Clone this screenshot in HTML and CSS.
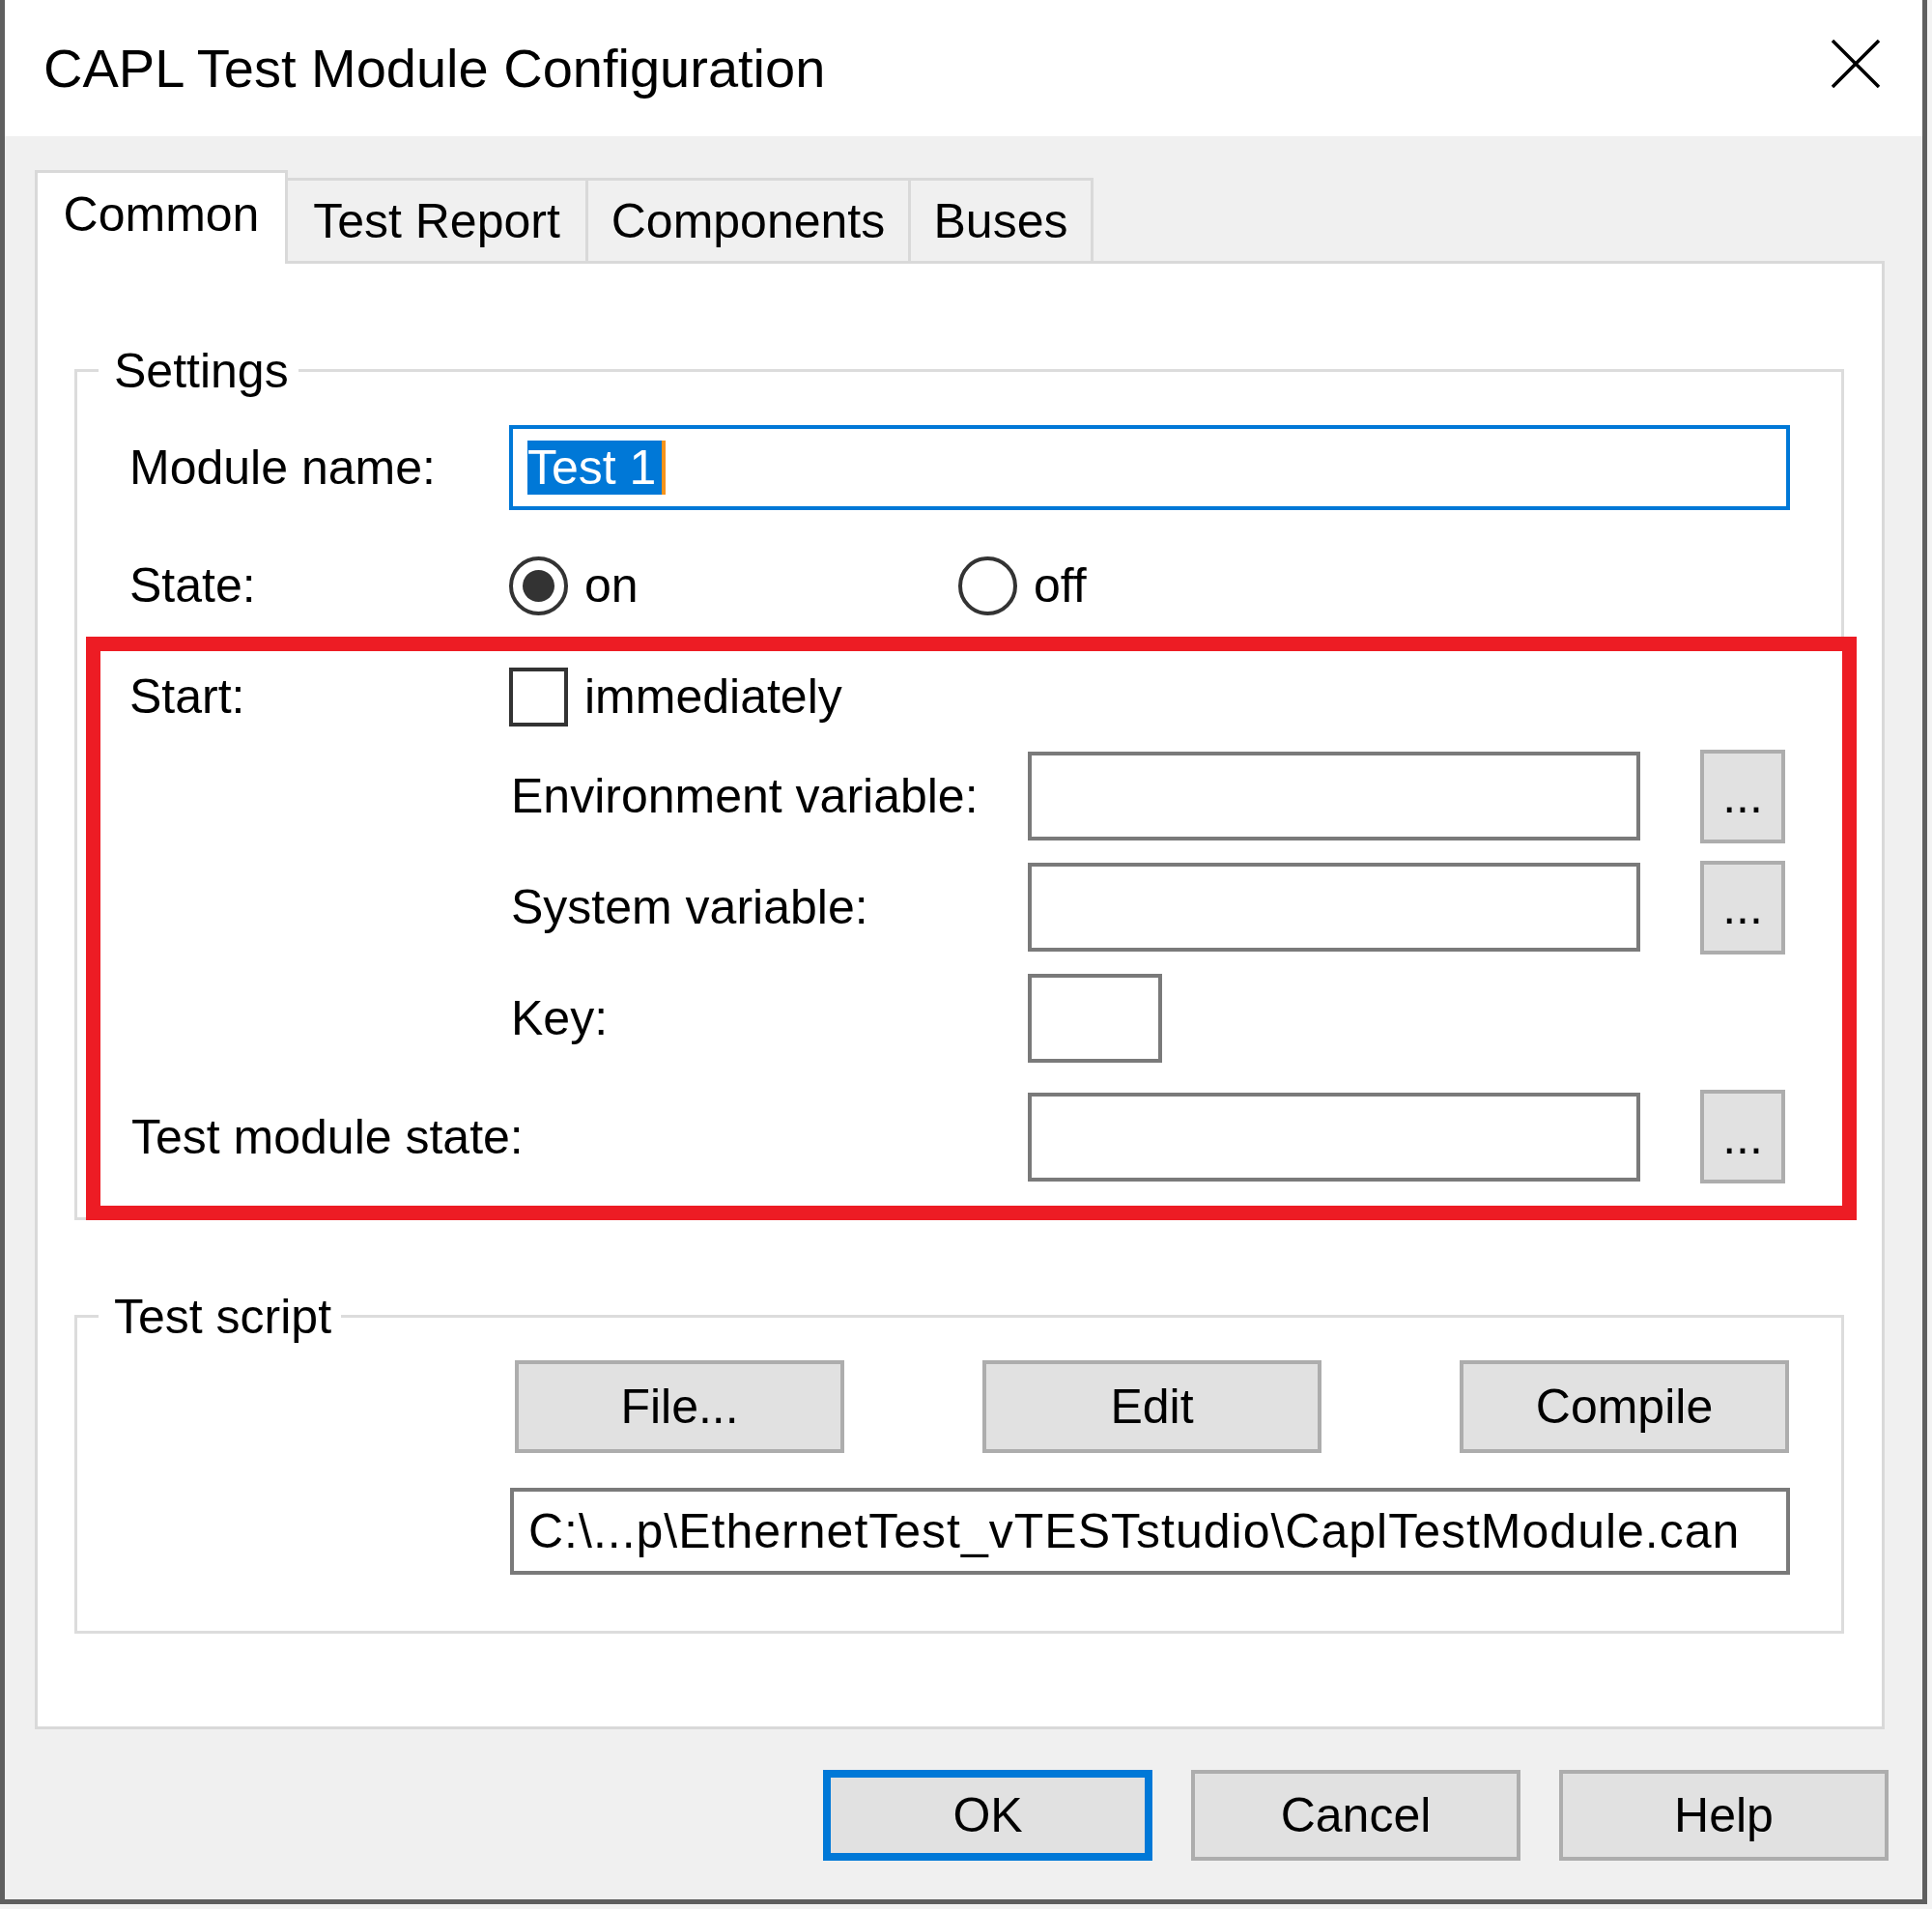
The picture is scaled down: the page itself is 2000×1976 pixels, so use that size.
FILE: index.html
```html
<!DOCTYPE html>
<html lang="en">

<head>
    <meta charset="UTF-8">
    <title>CAPL Test Module Configuration</title>
    <link rel="stylesheet" href="styles.css">
</head>

<body>

    <div class="window">

        <!-- Title bar -->
        <div class="titlebar">
            <span class="title">CAPL Test Module Configuration</span>
            <div class="close">
                <svg width="50" height="50" viewBox="0 0 50 50">
                    <path d="M1 1 L49 49 M49 1 L1 49" stroke="#000" stroke-width="3.5" fill="none" />
                </svg>
            </div>
        </div>

        <div class="dialog-body">

            <!-- Tabs -->
            <div class="tabs">
                <div class="tab active tab-common">Common</div>
                <div class="tab tab-report">Test Report</div>
                <div class="tab tab-components">Components</div>
                <div class="tab tab-buses">Buses</div>
            </div>

            <div class="panel">

                <!-- Settings group -->
                <div class="group settings">
                    <div class="group-title">Settings</div>

                    <div class="settings-top">
                        <span class="label">Module name:</span>
                        <div class="field field-focus">
                            <span class="selected">Test 1</span>
                        </div>

                        <span class="label">State:</span>
                        <div class="radios">
                            <label class="option option-on"><span class="radio checked"></span>on</label>
                            <label class="option"><span class="radio"></span>off</label>
                        </div>
                    </div>

                    <div class="start-box">
                        <span class="label">Start:</span>
                        <label class="option start-check"><span class="checkbox"></span>immediately</label>

                        <span class="label sub-label">Environment variable:</span>
                        <div class="field field-wide"></div>
                        <button class="btn btn-browse">...</button>

                        <span class="label sub-label">System variable:</span>
                        <div class="field field-wide"></div>
                        <button class="btn btn-browse">...</button>

                        <span class="label sub-label">Key:</span>
                        <div class="field field-key"></div>

                        <span class="label state-label">Test module state:</span>
                        <div class="field field-wide"></div>
                        <button class="btn btn-browse">...</button>
                    </div>
                </div>

                <!-- Test script group -->
                <div class="group script">
                    <div class="group-title">Test script</div>

                    <div class="script-content">
                        <div class="script-buttons">
                            <button class="btn btn-file">File...</button>
                            <button class="btn btn-edit">Edit</button>
                            <button class="btn btn-compile">Compile</button>
                        </div>
                        <div class="field field-path">C:\...p\EthernetTest_vTESTstudio\CaplTestModule.can</div>
                    </div>
                </div>

            </div>

            <!-- Dialog buttons -->
            <div class="footer">
                <button class="btn btn-dialog btn-default">OK</button>
                <button class="btn btn-dialog">Cancel</button>
                <button class="btn btn-dialog">Help</button>
            </div>

        </div>
    </div>

</body>

</html>
```

FILE: styles.css
```css
* {
    margin: 0;
    padding: 0;
    box-sizing: border-box;
}

body {
    width: 2000px;
    height: 1976px;
    background-color: #F3F3F3;
    font-family: "Liberation Sans", Arial, sans-serif;
    font-size: 50px;
    color: #000;
    overflow: hidden;
}

.window {
    width: 1995px;
    height: 1971px;
    display: flex;
    flex-direction: column;
    background-color: #F0F0F0;
    border: 5px solid #5F5F5F;
    border-top: none;
}

/* Title bar */
.titlebar {
    height: 141px;
    flex-shrink: 0;
    background-color: #FFFFFF;
    display: flex;
    align-items: center;
    justify-content: space-between;
    padding-left: 40px;
}

.title {
    font-size: 56px;
    color: #000;
}

.close {
    width: 138px;
    height: 132px;
    display: flex;
    align-items: center;
    justify-content: center;
    margin-bottom: 9px;
}

.dialog-body {
    flex: 1;
    display: flex;
    flex-direction: column;
    padding: 35px 39px 0 31px;
}

/* Tabs */
.tabs {
    display: flex;
    align-items: flex-end;
    height: 97px;
    margin-bottom: -3px;
    position: relative;
    z-index: 1;
}

.tab {
    height: 86px;
    margin-bottom: 3px;
    display: flex;
    align-items: center;
    justify-content: center;
    border-top: 3px solid #D9D9D9;
    border-right: 3px solid #D9D9D9;
    background-color: #F0F0F0;
    white-space: nowrap;
}

.tab.active {
    height: 97px;
    margin-bottom: 0;
    padding-bottom: 8px;
    border-left: 3px solid #D9D9D9;
    background-color: #FFFFFF;
}

.tab-common { width: 262px; }
.tab-report { width: 311px; }
.tab-components { width: 334px; }
.tab-buses { width: 189px; }

.panel {
    height: 1520px;
    flex-shrink: 0;
    background-color: #FFFFFF;
    border: 3px solid #D9D9D9;
    padding: 109px 39px 0 38px;
    display: flex;
    flex-direction: column;
}

/* Group boxes */
.group {
    border: 3px solid #DCDCDC;
}

.group-title {
    width: fit-content;
    line-height: 56px;
    height: 56px;
    margin: -29px 0 0 22px;
    padding: 0 10px 0 16px;
    background-color: #FFFFFF;
    white-space: nowrap;
}

.label {
    white-space: nowrap;
}

.settings-top {
    display: grid;
    grid-template-columns: 393px 1fr;
    grid-template-rows: 88px 58px;
    row-gap: 49px;
    align-items: center;
    padding: 28px 53px 0 54px;
}

.field {
    height: 92px;
    background-color: #FFFFFF;
    border: 4px solid #7A7A7A;
    display: flex;
    align-items: center;
    white-space: nowrap;
}

.field-focus {
    height: 88px;
    border-color: #0078D7;
    padding-left: 15px;
}

.selected {
    background-color: #0078D7;
    color: #FFFFFF;
    height: 56px;
    line-height: 56px;
    padding-right: 6px;
    border-right: 4px solid #F7941D;
}

.radios {
    display: flex;
    align-items: center;
}

.option {
    display: flex;
    align-items: center;
    gap: 17px;
    white-space: nowrap;
}

.option-on {
    width: 465px;
}

.radio {
    width: 61px;
    height: 61px;
    border-radius: 50%;
    border: 4px solid #333333;
    background-color: #FFFFFF;
    display: flex;
    align-items: center;
    justify-content: center;
}

.radio.checked::after {
    content: "";
    width: 33px;
    height: 33px;
    border-radius: 50%;
    background-color: #333333;
}

.checkbox {
    width: 61px;
    height: 61px;
    border: 4px solid #333333;
    background-color: #FFFFFF;
}

/* Red frame around the start options */
.start-box {
    display: grid;
    grid-template-columns: 393px 537px 634px 62px 88px;
    grid-template-rows: 86px 120px 110px 120px 125px;
    align-items: center;
    margin: 24px -16px -3px 9px;
    padding: 4px 0 9px 30px;
    border: 15px solid #ED1C24;
    background-color: #FFFFFF;
}

.start-check {
    grid-column: 2 / 4;
}

.sub-label {
    grid-column: 2;
    padding-left: 2px;
}

.state-label {
    grid-column: 1 / 3;
    padding-left: 2px;
}

.field-wide {
    grid-column: 3;
}

.field-key {
    grid-column: 3;
    width: 139px;
    height: 92px;
}

.btn {
    font-family: inherit;
    font-size: inherit;
    color: #000;
    background-color: #E1E1E1;
    border: 4px solid #ADADAD;
    display: flex;
    align-items: center;
    justify-content: center;
    white-space: nowrap;
}

.btn-browse {
    grid-column: 5;
    height: 97px;
    width: 88px;
}

/* Test script */
.script {
    margin-top: 98px;
}

.script-content {
    padding: 17px 53px 58px 448px;
}

.script-buttons {
    display: flex;
    justify-content: space-between;
    padding: 0 1px 0 5px;
    margin-bottom: 36px;
}

.script-buttons .btn {
    height: 96px;
    width: 341px;
}

.script-buttons .btn-edit {
    width: 351px;
}

.field-path {
    height: 90px;
    padding-left: 15px;
    letter-spacing: 1px;
    overflow: hidden;
}

/* Dialog buttons */
.footer {
    display: flex;
    justify-content: flex-end;
    gap: 40px;
    margin: 42px -4px 0 0;
}

.btn-dialog {
    width: 341px;
    height: 94px;
}

.btn-default {
    border: 8px solid #0078D7;
}
```
